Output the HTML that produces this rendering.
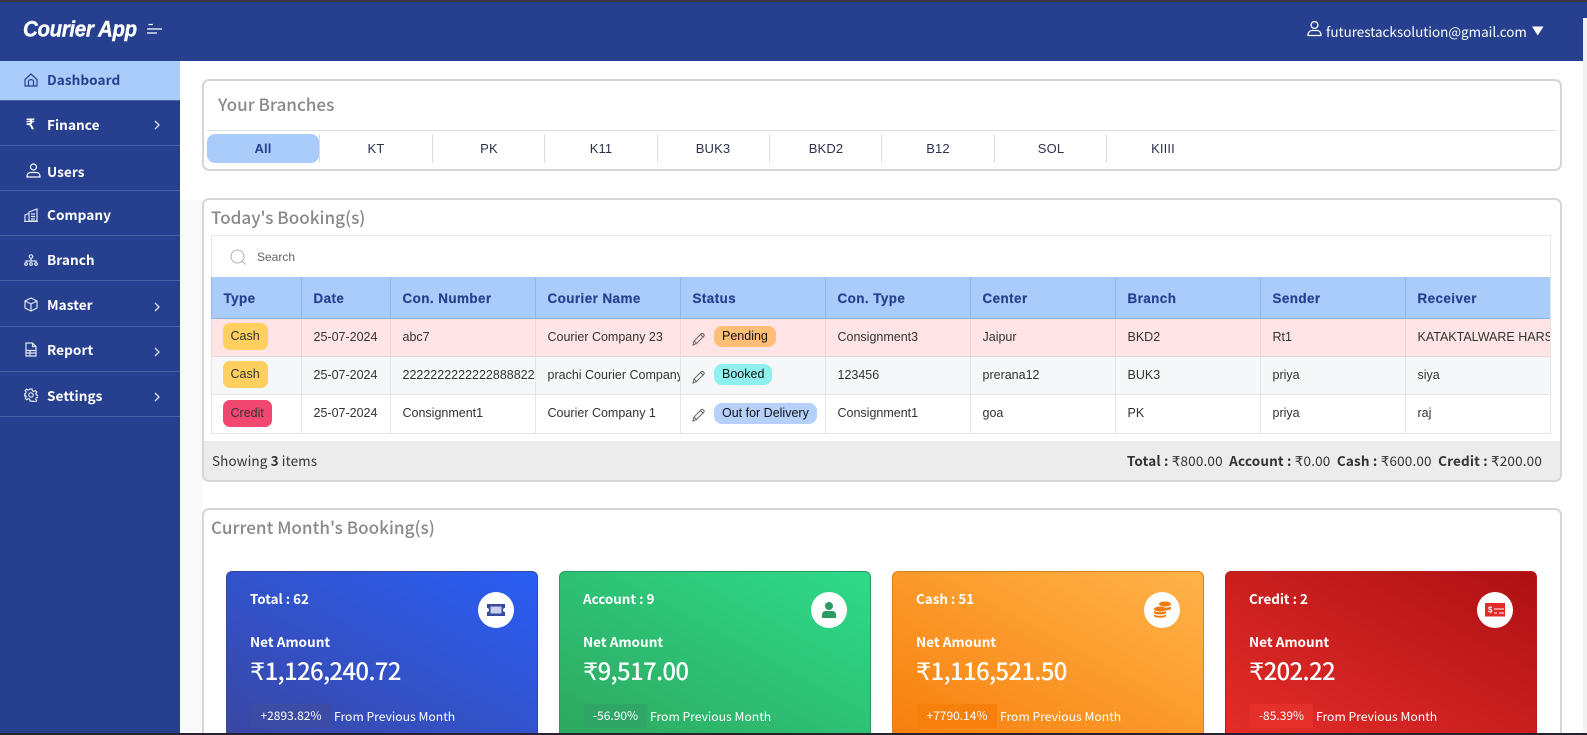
<!DOCTYPE html>
<html><head><meta charset="utf-8"><title>Courier App</title>
<style>
*{box-sizing:border-box}
html,body{margin:0;padding:0;width:1587px;height:735px;overflow:hidden;background:#fff}
body{position:relative;font-family:"Noto Sans CJK SC","Liberation Sans",sans-serif;color:#222}
.t{position:absolute;white-space:nowrap;line-height:20px}
.abs{position:absolute}
#top{left:0;top:0;width:1587px;height:61px;background:#26408f;border-top:2px solid #3a3a3e}
#side{left:0;top:61px;width:180px;height:674px;background:#26408f}
.ln{position:absolute;left:0;width:180px;height:1px;background:#4a60a6}
.m{left:47px;color:#fff;font-weight:700;font-size:13.6px;letter-spacing:.05px;margin-top:-1px}
.chev{position:absolute;left:153px;width:8px;height:10px}
.ic{position:absolute;fill:none;stroke:#dfe5f3;stroke-width:1.2}
.panel{position:absolute;left:202px;width:1360px;background:#fff;border:2px solid #d6d6d6;border-radius:7px}
.h{color:#8c8a88;font-weight:500;font-size:17.1px;margin-top:-1px}
.tab{position:absolute;top:134px;height:29px;text-align:center;width:112px;font:13px/29px "Liberation Sans",sans-serif;color:#2c3150;letter-spacing:.15px}
.sep{position:absolute;top:134px;width:1px;height:29px;background:#dedede}
#wrap{position:absolute;left:211px;top:277px;width:1340px;height:157px;overflow:hidden;border-right:1px solid #e6e6e6}
table{border-collapse:collapse;table-layout:fixed;width:1345px;font:12.5px "Liberation Sans",sans-serif;color:#333}
td span,td{line-height:normal}
th,td{padding:0 0 0 11.5px;text-align:left;white-space:nowrap;overflow:hidden;border:1px solid #e4e4e4}
td{padding-bottom:1px}
th{height:41px;padding-top:2px;background:#aaccfb;color:#26408f;font-size:13.4px;letter-spacing:.45px;font-weight:700;border-color:#94b6e8;border-top:0;border-bottom:1px solid #8fb2e6;-webkit-text-stroke:.2px #26408f}
tr.a td{background:#ffe4e6;height:38px;border-color:#e8d6da}
tr.b td{background:#f6f7f9;height:38px}
tr.c td{background:#fff;height:39px}
.ty{display:inline-block;height:27px;line-height:26px;padding:0 8px;border-radius:7px;background:#ffd060;margin-left:-1px;font-size:12.5px;vertical-align:middle}
.ty.r{background:#f24771}
.st{display:inline-block;height:21px;line-height:20px;padding:0 8px;border-radius:8px;color:#111;font-size:12.5px;margin-left:8px;vertical-align:middle}
.pen{display:inline-block;width:14px;height:14px;vertical-align:middle;margin-left:11px;margin-top:4px;fill:none;stroke:#666;stroke-width:1}
.card{position:absolute;top:571px;width:312px;height:170px;border-radius:6px;color:#fff}
.card .t{color:#fff}
.circ{position:absolute;left:251px;top:20px;width:36px;height:36px;border-radius:50%;background:#fff}
.bd{position:absolute;left:24px;top:132px;height:24px;line-height:24px;text-align:center;font-size:12px}
.a1{left:23px;top:16px;font-size:13.4px;font-weight:700}
.a2{left:23px;top:59px;font-size:13.6px;font-weight:700}
.a3{left:23px;top:83px;font-size:24px;line-height:30px;font-weight:500;letter-spacing:-.7px}
.a4{top:134px;font-size:12.2px}
</style></head><body>
<div class="abs" id="top"></div>
<div class="t" style="left:23px;top:19px;font:italic 700 20.5px/22px 'Liberation Sans',sans-serif;color:#fff;letter-spacing:-.35px;transform:scaleY(1.08);transform-origin:left center;-webkit-text-stroke:.35px #fff">Courier App</div>
<svg class="abs" style="left:146px;top:22px" width="18" height="14"><path d="M2.500 2.500H7M1 7H16M1 11H11" stroke="#fff" stroke-width="1.2" fill="none"/></svg>
<svg class="abs" style="left:1306px;top:20px" width="17" height="17" fill="none" stroke="#fff" stroke-width="1.3"><circle cx="8.500" cy="5" r="3.400"/><path d="M2 15.500c0-3.500 2-5 4-5h5c2 0 4 1.500 4 5z"/></svg>
<div class="t" style="left:1326px;top:21px;color:#fff;font-size:13.45px">futurestacksolution@gmail.com</div>
<svg class="abs" style="left:1532px;top:26px" width="12" height="10"><path d="M0 .5H11.500L5.750 9.500z" fill="#fff"/></svg>

<div class="abs" id="side"></div>
<div class="abs" style="left:0;top:61px;width:180px;height:39px;background:#aaccfb"></div>
<div class="ln" style="top:100px"></div><div class="ln" style="top:145px"></div><div class="ln" style="top:190px"></div><div class="ln" style="top:235px"></div><div class="ln" style="top:280px"></div><div class="ln" style="top:326px"></div><div class="ln" style="top:371px"></div><div class="ln" style="top:416px"></div>

<svg class="ic" style="left:24px;top:73px;stroke:#26408f" width="14" height="14"><path d="M1 6.500L7 1l6 5.500V13H1zM4.500 13V8.500c0-2.500 5-2.500 5 0V13"/></svg>
<div class="t m" style="top:70px;color:#26408f">Dashboard</div>
<div class="t" style="left:26px;top:114px;color:#fff;font-size:14px;font-weight:700">₹</div>
<div class="t m" style="top:115px">Finance</div>
<svg class="ic" style="left:26px;top:163px;stroke:#fff" width="15" height="15"><circle cx="7.500" cy="4" r="3"/><path d="M1 14c0-3 1.500-4.500 3.500-4.500h6c2 0 3.500 1.500 3.500 4.500z"/></svg>
<div class="t m" style="top:162px">Users</div>
<svg class="ic" style="left:24px;top:208px" width="14" height="14"><path d="M1 13V7l4-1.500V13M5 13V4l8-3v12zM0 13.500H14M7 6h4M7 8.500h4M7 11h4" /></svg>
<div class="t m" style="top:205px">Company</div>
<svg class="ic" style="left:24px;top:254px" width="14" height="12"><circle cx="7" cy="2.500" r="1.700"/><path d="M7 4.500V7M2 9V7H12V9"/><circle cx="2" cy="10" r="1.300"/><circle cx="7" cy="10" r="1.300"/><circle cx="12" cy="10" r="1.300"/></svg>
<div class="t m" style="top:250px">Branch</div>
<svg class="ic" style="left:24px;top:297px" width="14" height="15"><path d="M7 1l6 3v7l-6 3-6-3V4zM1 4l6 3 6-3M7 7v7"/></svg>
<div class="t m" style="top:295px">Master</div>
<svg class="ic" style="left:25px;top:342px" width="12" height="15"><path d="M1 1h6.500L11 4.500V14H1zM7.500 1v3.500H11M1 8.500H11M1 11H11M5 8.500V14"/></svg>
<div class="t m" style="top:340px">Report</div>
<svg class="ic" style="left:24px;top:388px" width="14" height="14"><circle cx="7" cy="7" r="2.200"/><path d="M6 1h2l.4 1.800 1.500.7 1.600-1 1.300 1.500-1 1.500.6 1.500 1.600.4v2l-1.700.4-.6 1.500 1 1.500-1.400 1.400-1.500-1-1.500.6L8 13H6l-.4-1.700-1.500-.6-1.500 1-1.400-1.400 1-1.500-.6-1.500L0 8V6l1.600-.5.600-1.500-1-1.500L2.600 1.100l1.500 1 1.500-.6z"/></svg>
<div class="t m" style="top:386px">Settings</div>
<svg class="chev" style="top:120px" fill="none" stroke="#dfe5f3" stroke-width="1.300"><path d="M2 1l4 4-4 4"/></svg>
<svg class="chev" style="top:302px" fill="none" stroke="#dfe5f3" stroke-width="1.300"><path d="M2 1l4 4-4 4"/></svg>
<svg class="chev" style="top:347px" fill="none" stroke="#dfe5f3" stroke-width="1.300"><path d="M2 1l4 4-4 4"/></svg>
<svg class="chev" style="top:392px" fill="none" stroke="#dfe5f3" stroke-width="1.300"><path d="M2 1l4 4-4 4"/></svg>

<div class="abs" style="left:180px;top:200px;width:22px;height:535px;background:#f8f9fa"></div>
<div class="abs" style="left:1583px;top:18px;width:4px;height:717px;background:#f1f1f1"></div>

<div class="panel" style="top:79px;height:92px"></div>
<div class="t h" style="left:218px;top:95px">Your Branches</div>
<div class="abs" style="left:207px;top:130px;width:1349px;height:1px;background:#dcdcdc"></div>
<div class="abs" style="left:207px;top:134px;width:112px;height:29px;background:#aaccfb;border-radius:8px"></div>
<div class="tab" style="left:207px;font-weight:700;color:#26408f">All</div>
<div class="sep" style="left:319px"></div><div class="tab" style="left:320px">KT</div>
<div class="sep" style="left:432px"></div><div class="tab" style="left:433px">PK</div>
<div class="sep" style="left:544px"></div><div class="tab" style="left:545px">K11</div>
<div class="sep" style="left:657px"></div><div class="tab" style="left:657px">BUK3</div>
<div class="sep" style="left:769px"></div><div class="tab" style="left:770px">BKD2</div>
<div class="sep" style="left:881px"></div><div class="tab" style="left:882px">B12</div>
<div class="sep" style="left:994px"></div><div class="tab" style="left:995px">SOL</div>
<div class="sep" style="left:1106px"></div><div class="tab" style="left:1107px">KIIII</div>

<div class="panel" style="top:198px;height:284px;overflow:hidden"><div class="abs" style="left:0;top:241px;width:1360px;height:41px;background:#ececec"></div></div>
<div class="t h" style="left:211px;top:208px">Today's Booking(s)</div>
<div class="abs" style="left:211px;top:235px;width:1340px;height:43px;border:1px solid #e8e8e8;border-bottom:0"></div>
<svg class="abs" style="left:230px;top:249px" width="17" height="17" fill="none" stroke="#b5b5b5" stroke-width="1.100"><circle cx="7.500" cy="7.500" r="6.500"/><path d="M12 12l3.500 3.500"/></svg>
<div class="t" style="left:257px;top:247px;font:12px/20px 'Liberation Sans',sans-serif;color:#666">Search</div>

<div id="wrap"><table>
<colgroup><col style="width:90px"><col style="width:89px"><col style="width:145px"><col style="width:145px"><col style="width:145px"><col style="width:145px"><col style="width:145px"><col style="width:145px"><col style="width:145px"><col style="width:151px"></colgroup>
<tr><th>Type</th><th>Date</th><th>Con. Number</th><th>Courier Name</th><th>Status</th><th>Con. Type</th><th>Center</th><th>Branch</th><th>Sender</th><th>Receiver</th></tr>
<tr class="a"><td><span class="ty">Cash</span></td><td>25-07-2024</td><td>abc7</td><td>Courier Company 23</td><td style="padding:0 0 1px"><svg class="pen" viewBox="0 0 14 14"><path d="M1 13l1-4L9.500 1.500c1-1 3.500 1.500 2.500 2.500L4.500 11.500zM2 9l3 3M8.500 2.500l3 3"/></svg><span class="st" style="background:#ffbe75">Pending</span></td><td>Consignment3</td><td>Jaipur</td><td>BKD2</td><td>Rt1</td><td>KATAKTALWARE HARSHAD</td></tr>
<tr class="b"><td><span class="ty">Cash</span></td><td>25-07-2024</td><td>2222222222222888822</td><td>prachi Courier Company</td><td style="padding:0 0 1px"><svg class="pen" viewBox="0 0 14 14"><path d="M1 13l1-4L9.500 1.500c1-1 3.500 1.500 2.500 2.500L4.500 11.500zM2 9l3 3M8.500 2.500l3 3"/></svg><span class="st" style="background:#90f0ee">Booked</span></td><td>123456</td><td>prerana12</td><td>BUK3</td><td>priya</td><td>siya</td></tr>
<tr class="c"><td><span class="ty r">Credit</span></td><td>25-07-2024</td><td>Consignment1</td><td>Courier Company 1</td><td style="padding:0 0 1px"><svg class="pen" viewBox="0 0 14 14"><path d="M1 13l1-4L9.500 1.500c1-1 3.500 1.500 2.500 2.500L4.500 11.500zM2 9l3 3M8.500 2.500l3 3"/></svg><span class="st" style="background:#b4d0fb">Out for Delivery</span></td><td>Consignment1</td><td>goa</td><td>PK</td><td>priya</td><td>raj</td></tr>
</table></div>

<div class="t" style="left:212px;top:450px;font-size:13.5px;letter-spacing:.1px;color:#333">Showing <b>3</b> items</div>
<div class="t" style="right:45px;top:450px;font-size:13.5px;letter-spacing:.17px;color:#333"><b>Total :</b> ₹800.00 &nbsp;<b>Account :</b> ₹0.00 &nbsp;<b>Cash :</b> ₹600.00 &nbsp;<b>Credit :</b> ₹200.00</div>

<div class="panel" style="top:508px;height:240px"></div>
<div class="t h" style="left:211px;top:518px">Current Month's Booking(s)</div>

<div class="card" style="left:226px;background:linear-gradient(to top right,#3a47a2,#2a5ef5);border:1px solid #33489c">
<div class="t a1">Total : 62</div>
<div class="circ"><svg class="abs" style="left:9px;top:11px" width="18" height="14"><path d="M0 1H18V5a2 2 0 0 0 0 4v4H0V9a2 2 0 0 0 0-4z" fill="#33489e"/><rect x="3.500" y="3.500" width="11" height="7" fill="#c8d0ee"/></svg></div>
<div class="t a2">Net Amount</div>
<div class="t a3">₹1,126,240.72</div>
<div class="bd" style="width:80px;background:#3c4ca4">+2893.82%</div>
<div class="t a4" style="left:107px">From Previous Month</div></div>

<div class="card" style="left:559px;background:linear-gradient(to top right,#2ea75f,#2edb8a);border:1px solid #2a9a5c">
<div class="t a1">Account : 9</div>
<div class="circ"><svg class="abs" style="left:10px;top:9px" width="16" height="18" fill="#2c9a62"><circle cx="8" cy="5" r="4"/><path d="M1 17v-3c0-3 2-4 4-4h6c2 0 4 1 4 4v3z"/></svg></div>
<div class="t a2">Net Amount</div>
<div class="t a3">₹9,517.00</div>
<div class="bd" style="width:63px;background:#30a666">-56.90%</div>
<div class="t a4" style="left:90px">From Previous Month</div></div>

<div class="card" style="left:892px;background:linear-gradient(to top right,#f77f0c,#ffb44a);border:1px solid #d9801c">
<div class="t a1">Cash : 51</div>
<div class="circ"><svg class="abs" style="left:9px;top:9px" width="20" height="18" fill="#f07c10"><ellipse cx="12" cy="3" rx="6" ry="2.500"/><path d="M6 5.500c2 1.500 10 1.500 12 0v2.500c-1 1-4 1.500-6 1.500z"/><ellipse cx="7" cy="8" rx="6" ry="2.500"/><path d="M1 9.800c2 1.700 10 1.700 12 0v2.400c-2 1.600-10 1.600-12 0zM1 13.500c2 1.700 10 1.700 12 0v1.800c-2 1.900-10 1.900-12 0z"/></svg></div>
<div class="t a2">Net Amount</div>
<div class="t a3">₹1,116,521.50</div>
<div class="bd" style="width:80px;background:#f7800d">+7790.14%</div>
<div class="t a4" style="left:107px">From Previous Month</div></div>

<div class="card" style="left:1225px;background:linear-gradient(to top right,#e42e2a,#af1014);border:1px solid #b81c1c">
<div class="t a1">Credit : 2</div>
<div class="circ"><svg class="abs" style="left:8px;top:11px" width="20" height="14"><rect width="20" height="13.500" fill="#e22b28"/><path d="M9 6H19M9 10H12M14 10H19" stroke="#fff" stroke-width="1"/><text x="3" y="9.500" font-size="8" font-weight="700" fill="#fff" font-family="Liberation Sans">$</text></svg></div>
<div class="t a2">Net Amount</div>
<div class="t a3">₹202.22</div>
<div class="bd" style="width:63px;background:#e42f2b">-85.39%</div>
<div class="t a4" style="left:90px">From Previous Month</div></div>

<div class="abs" style="left:0;top:733px;width:1587px;height:2px;background:#2b2030"></div>
</body></html>
